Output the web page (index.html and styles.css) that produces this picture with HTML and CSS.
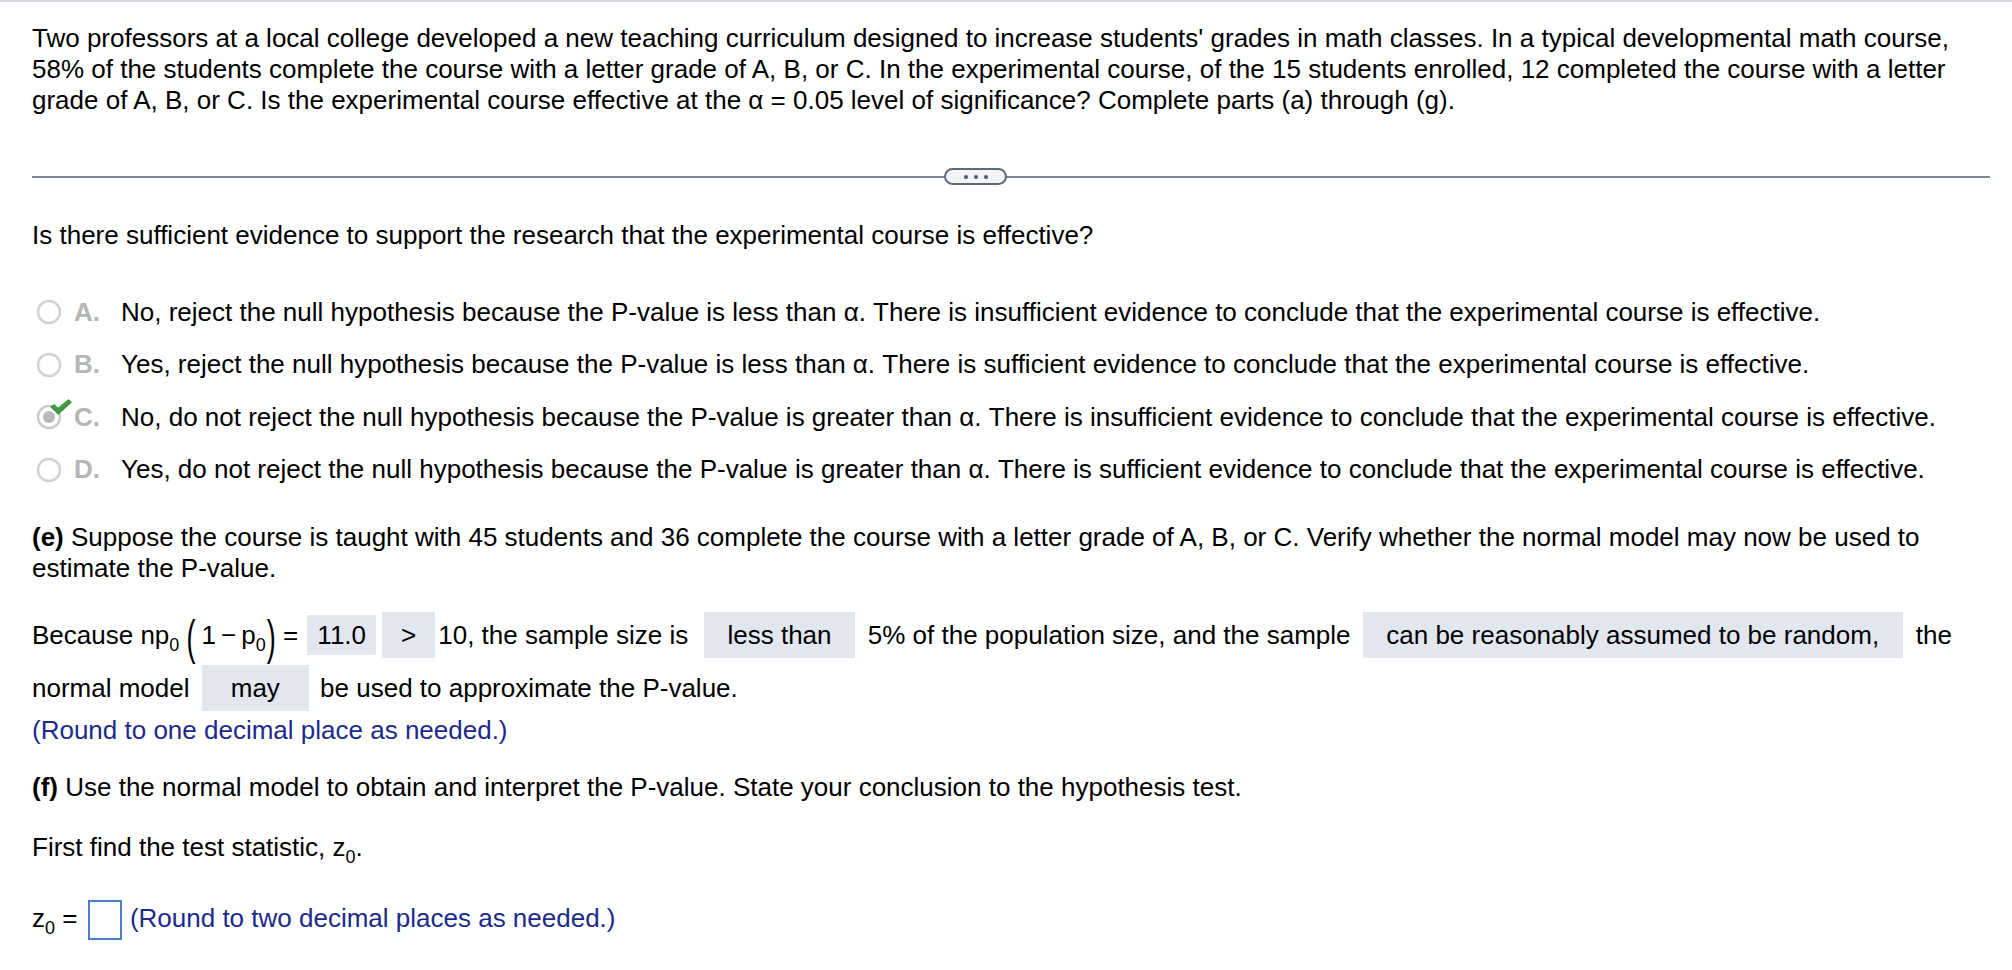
FILE: index.html
```html
<!DOCTYPE html>
<html>
<head>
<meta charset="utf-8">
<title>Question</title>
<link rel="stylesheet" href="styles.css">
</head>
<body>
<div class="page">
  <p class="stem">Two professors at a local college developed a new teaching curriculum designed to increase students' grades in math classes. In a typical developmental math course, 58% of the students complete the course with a letter grade of A, B, or C. In the experimental course, of the 15 students enrolled, 12 completed the course with a letter grade of A, B, or C. Is the experimental course effective at the α = 0.05 level of significance? Complete parts (a) through (g).</p>

  <div class="divider"><span class="pill"><i></i><i></i><i></i></span></div>

  <p class="question">Is there sufficient evidence to support the research that the experimental course is effective?</p>

  <ul class="options">
    <li class="opt"><span class="radio"></span><span class="letter">A.</span><span class="otext">No, reject the null hypothesis because the P-value is less than α. There is insufficient evidence to conclude that the experimental course is effective.</span></li>
    <li class="opt"><span class="radio"></span><span class="letter">B.</span><span class="otext">Yes, reject the null hypothesis because the P-value is less than α. There is sufficient evidence to conclude that the experimental course is effective.</span></li>
    <li class="opt"><span class="radio checked"><svg class="check" viewBox="0 0 22 16" width="22" height="16"><path d="M0.8 8.2 L4.2 5.4 L8 9.2 L18.6 0.6 L21.4 3.4 L8.2 15.2 Z" fill="#3e9c3f" stroke="#2f7f31" stroke-width="0.8"/></svg></span><span class="letter">C.</span><span class="otext">No, do not reject the null hypothesis because the P-value is greater than α. There is insufficient evidence to conclude that the experimental course is effective.</span></li>
    <li class="opt"><span class="radio"></span><span class="letter">D.</span><span class="otext">Yes, do not reject the null hypothesis because the P-value is greater than α. There is sufficient evidence to conclude that the experimental course is effective.</span></li>
  </ul>

  <p class="part-e"><b>(e)</b> Suppose the course is taught with 45 students and 36 complete the course with a letter grade of A, B, or C. Verify whether the normal model may now be used to estimate the P-value.</p>

  <div class="fill">Because np<sub>0</sub> <span class="paren open">(</span>1<span class="minus">−</span>p<sub>0</sub><span class="paren close">)</span> = <span class="box num">11.0</span><span class="box gt">&gt;</span>10, the sample size is <span class="box lt">less than</span> 5% of the population size, and the sample <span class="box rnd">can be reasonably assumed to be random,</span> the normal model <span class="box may">may</span> be used to approximate the P-value.</div>

  <p class="hint one">(Round to one decimal place as needed.)</p>

  <p class="part-f"><b>(f)</b> Use the normal model to obtain and interpret the P-value. State your conclusion to the hypothesis test.</p>

  <p class="first">First find the test statistic, z<sub>0</sub>.</p>

  <div class="zrow">z<sub>0</sub> = <span class="input"></span> <span class="hint">(Round to two decimal places as needed.)</span></div>
</div>
</body>
</html>
```

FILE: styles.css
```css
html, body {
  margin: 0;
  padding: 0;
  background: #ffffff;
}

body {
  font-family: "Liberation Sans", Arial, Helvetica, sans-serif;
  font-size: 26px;
  color: #000000;
}

.page {
  border-top: 2px solid #d4d8e1;
  padding: 21px 22px 0 32px;
}

p {
  margin: 0;
  line-height: 31px;
}

sub {
  font-size: 18px;
  line-height: 0;
  vertical-align: -7px;
}

.stem {
  margin: 0;
}

.divider {
  position: relative;
  height: 2px;
  background: #7e8794;
  margin-top: 60px;
}

.pill {
  position: absolute;
  left: 912px;
  top: -8px;
  width: 59px;
  height: 13px;
  border: 2px solid #5f6a79;
  border-radius: 9px;
  background: #f3f4f6;
  display: flex;
  align-items: center;
  justify-content: center;
  gap: 6px;
}

.pill i {
  display: block;
  width: 4px;
  height: 4px;
  border-radius: 50%;
  background: #4f5866;
}

.question {
  margin-top: 41.5px;
}

.options {
  list-style: none;
  margin: 46px 0 0;
  padding: 0;
  display: grid;
  row-gap: 21.5px;
}

.opt {
  display: flex;
  align-items: center;
  line-height: 31px;
}

.radio {
  position: relative;
  flex: none;
  width: 20px;
  height: 20px;
  margin-left: 5px;
  border: 2px solid #d2d2d2;
  border-radius: 50%;
  background: #ffffff;
  box-shadow: 0 0 1px #c4c4c4, inset 0 0 1px #c4c4c4;
}

.radio.checked {
  border-color: #c9c9c9;
}

.radio.checked::after {
  content: "";
  position: absolute;
  left: 4px;
  top: 4px;
  width: 12px;
  height: 12px;
  border-radius: 50%;
  background: #b9b9b9;
}

.check {
  position: absolute;
  left: 11px;
  top: -8px;
  z-index: 2;
}

.letter {
  flex: none;
  width: 47px;
  margin-left: 13px;
  color: #b5b5b5;
  font-weight: bold;
}

.otext {
  white-space: nowrap;
}

.part-e {
  margin-top: 36.5px;
}

.fill {
  margin-top: 25px;
  line-height: 53px;
}

.paren {
  display: inline-block;
  font-size: 27px;
  line-height: 27px;
  transform: scaleY(1.8) translateY(2px);
}

.paren.open {
  margin-right: 6px;
}

.paren.close {
  margin-left: 1px;
}

.minus {
  margin: 0 5px;
}

.box {
  display: inline-block;
  height: 46px;
  line-height: 46px;
  background: #e1e6ef;
  margin: 0 6px;
}

.box.num {
  height: 40px;
  line-height: 40px;
  padding: 0 10px;
  margin: 0 3px 0 2px;
}

.box.gt {
  padding: 0 19px;
  margin: 0 3px;
}

.box.lt {
  padding: 0 23px;
  margin: 0 6px 0 9px;
}

.box.rnd {
  padding: 0 23.5px;
  margin: 0 6px 0 5px;
}

.box.may {
  padding: 0 29px;
  margin: 0 4px 0 5px;
}

.hint {
  color: #1b2a8c;
}

.part-f {
  margin-top: 26px;
}

.first {
  margin-top: 29px;
}

.zrow {
  margin-top: 35.5px;
  line-height: 40px;
}

.input {
  display: inline-block;
  vertical-align: middle;
  width: 30px;
  height: 36px;
  margin: 0 1px 0 3px;
  border: 2px solid #4a7dce;
  background: #ffffff;
}
```
